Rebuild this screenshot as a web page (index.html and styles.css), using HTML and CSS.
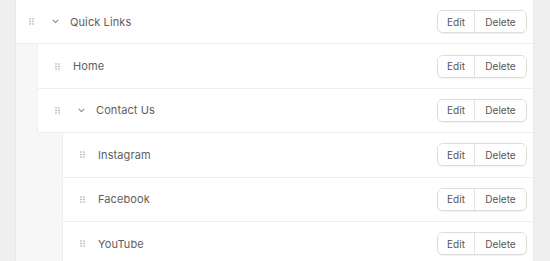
FILE: index.html
```html
<!DOCTYPE html>
<html>
<head>
<meta charset="utf-8">
<link rel="stylesheet" href="styles.css">
</head>
<body>
<div class="page">
  <div class="panel">
    <div class="row row-top">
      <span class="handle"><svg width="5" height="7" viewBox="0 0 5 7"><g fill="#9a9a9a"><circle cx="1" cy="1" r="0.75"/><circle cx="4" cy="1" r="0.75"/><circle cx="1" cy="3.5" r="0.75"/><circle cx="4" cy="3.5" r="0.75"/><circle cx="1" cy="6" r="0.75"/><circle cx="4" cy="6" r="0.75"/></g></svg></span>
      <span class="chev"><svg width="7" height="5" viewBox="0 0 7 5"><path d="M1 1.2 L3.5 3.7 L6 1.2" fill="none" stroke="#8a8a8a" stroke-width="1.1" stroke-linecap="round" stroke-linejoin="round"/></svg></span>
      <span class="label">Quick Links</span>
      <div class="actions"><button class="btn btn-edit">Edit</button><button class="btn btn-del">Delete</button></div>
    </div>
    <div class="children lvl1">
      <div class="row">
        <span class="handle"><svg width="5" height="7" viewBox="0 0 5 7"><g fill="#9a9a9a"><circle cx="1" cy="1" r="0.75"/><circle cx="4" cy="1" r="0.75"/><circle cx="1" cy="3.5" r="0.75"/><circle cx="4" cy="3.5" r="0.75"/><circle cx="1" cy="6" r="0.75"/><circle cx="4" cy="6" r="0.75"/></g></svg></span>
        <span class="label">Home</span>
        <div class="actions"><button class="btn btn-edit">Edit</button><button class="btn btn-del">Delete</button></div>
      </div>
      <div class="row">
        <span class="handle"><svg width="5" height="7" viewBox="0 0 5 7"><g fill="#9a9a9a"><circle cx="1" cy="1" r="0.75"/><circle cx="4" cy="1" r="0.75"/><circle cx="1" cy="3.5" r="0.75"/><circle cx="4" cy="3.5" r="0.75"/><circle cx="1" cy="6" r="0.75"/><circle cx="4" cy="6" r="0.75"/></g></svg></span>
        <span class="chev"><svg width="7" height="5" viewBox="0 0 7 5"><path d="M1 1.2 L3.5 3.7 L6 1.2" fill="none" stroke="#8a8a8a" stroke-width="1.1" stroke-linecap="round" stroke-linejoin="round"/></svg></span>
        <span class="label">Contact Us</span>
        <div class="actions"><button class="btn btn-edit">Edit</button><button class="btn btn-del">Delete</button></div>
      </div>
      <div class="children lvl2">
        <div class="row">
          <span class="handle"><svg width="5" height="7" viewBox="0 0 5 7"><g fill="#9a9a9a"><circle cx="1" cy="1" r="0.75"/><circle cx="4" cy="1" r="0.75"/><circle cx="1" cy="3.5" r="0.75"/><circle cx="4" cy="3.5" r="0.75"/><circle cx="1" cy="6" r="0.75"/><circle cx="4" cy="6" r="0.75"/></g></svg></span>
          <span class="label">Instagram</span>
          <div class="actions"><button class="btn btn-edit">Edit</button><button class="btn btn-del">Delete</button></div>
        </div>
        <div class="row">
          <span class="handle"><svg width="5" height="7" viewBox="0 0 5 7"><g fill="#9a9a9a"><circle cx="1" cy="1" r="0.75"/><circle cx="4" cy="1" r="0.75"/><circle cx="1" cy="3.5" r="0.75"/><circle cx="4" cy="3.5" r="0.75"/><circle cx="1" cy="6" r="0.75"/><circle cx="4" cy="6" r="0.75"/></g></svg></span>
          <span class="label">Facebook</span>
          <div class="actions"><button class="btn btn-edit">Edit</button><button class="btn btn-del">Delete</button></div>
        </div>
        <div class="row">
          <span class="handle"><svg width="5" height="7" viewBox="0 0 5 7"><g fill="#9a9a9a"><circle cx="1" cy="1" r="0.75"/><circle cx="4" cy="1" r="0.75"/><circle cx="1" cy="3.5" r="0.75"/><circle cx="4" cy="3.5" r="0.75"/><circle cx="1" cy="6" r="0.75"/><circle cx="4" cy="6" r="0.75"/></g></svg></span>
          <span class="label">YouTube</span>
          <div class="actions"><button class="btn btn-edit">Edit</button><button class="btn btn-del">Delete</button></div>
        </div>
      </div>
    </div>
  </div>
</div>
</body>
</html>
```
FILE: styles.css
```css
html, body {
  margin: 0;
  padding: 0;
  background: #efefef;
  width: 550px;
  height: 261px;
  overflow: hidden;
  font-family: Inter, "Noto Sans", sans-serif;
}
.page {
  padding: 0 16px 0 15px;
}
.panel {
  background: #ffffff;
  border-left: 1px solid #e9e9e9;
  border-right: 1px solid #e9e9e9;
  height: 270px;
}
.row {
  display: flex;
  align-items: center;
  height: 44.4px;
  box-sizing: border-box;
  border-bottom: 1px solid #efefef;
  background: #ffffff;
  padding: 0 6px 0 17px;
}
.row-top {
  padding-left: 13px;
}
.handle {
  display: flex;
  width: 5px;
  height: 7px;
  margin-right: 13px;
}
.handle svg { display: block; }
.chev {
  display: flex;
  width: 7px;
  height: 5px;
  margin-left: 5px;
  margin-right: 11px;
}
.chev svg { display: block; }
.label {
  font-size: 11px;
  color: #5e5e5e;
  letter-spacing: 0.1px;
}
.actions {
  margin-left: auto;
  display: flex;
  height: 23px;
  border: 1px solid #dcdcdc;
  border-radius: 6px;
  box-shadow: 0 1px 1px rgba(0,0,0,0.06);
  box-sizing: border-box;
  overflow: hidden;
  background: #fff;
}
.btn {
  font-family: Inter, "Noto Sans", sans-serif;
  font-size: 10px;
  color: #555555;
  background: #ffffff;
  border: none;
  padding: 0;
  margin: 0;
  height: 100%;
}
.btn-edit {
  width: 37px;
  border-right: 1px solid #e2e2e2;
}
.btn-del {
  width: 51px;
}
.children {
  background: #f7f7f7;
}
.children > .row {
  border-left: 1px solid #efefef;
}
.lvl1 {
  padding-left: 21px;
}
.lvl2 {
  padding-left: 25px;
  height: 200px;
}
```
